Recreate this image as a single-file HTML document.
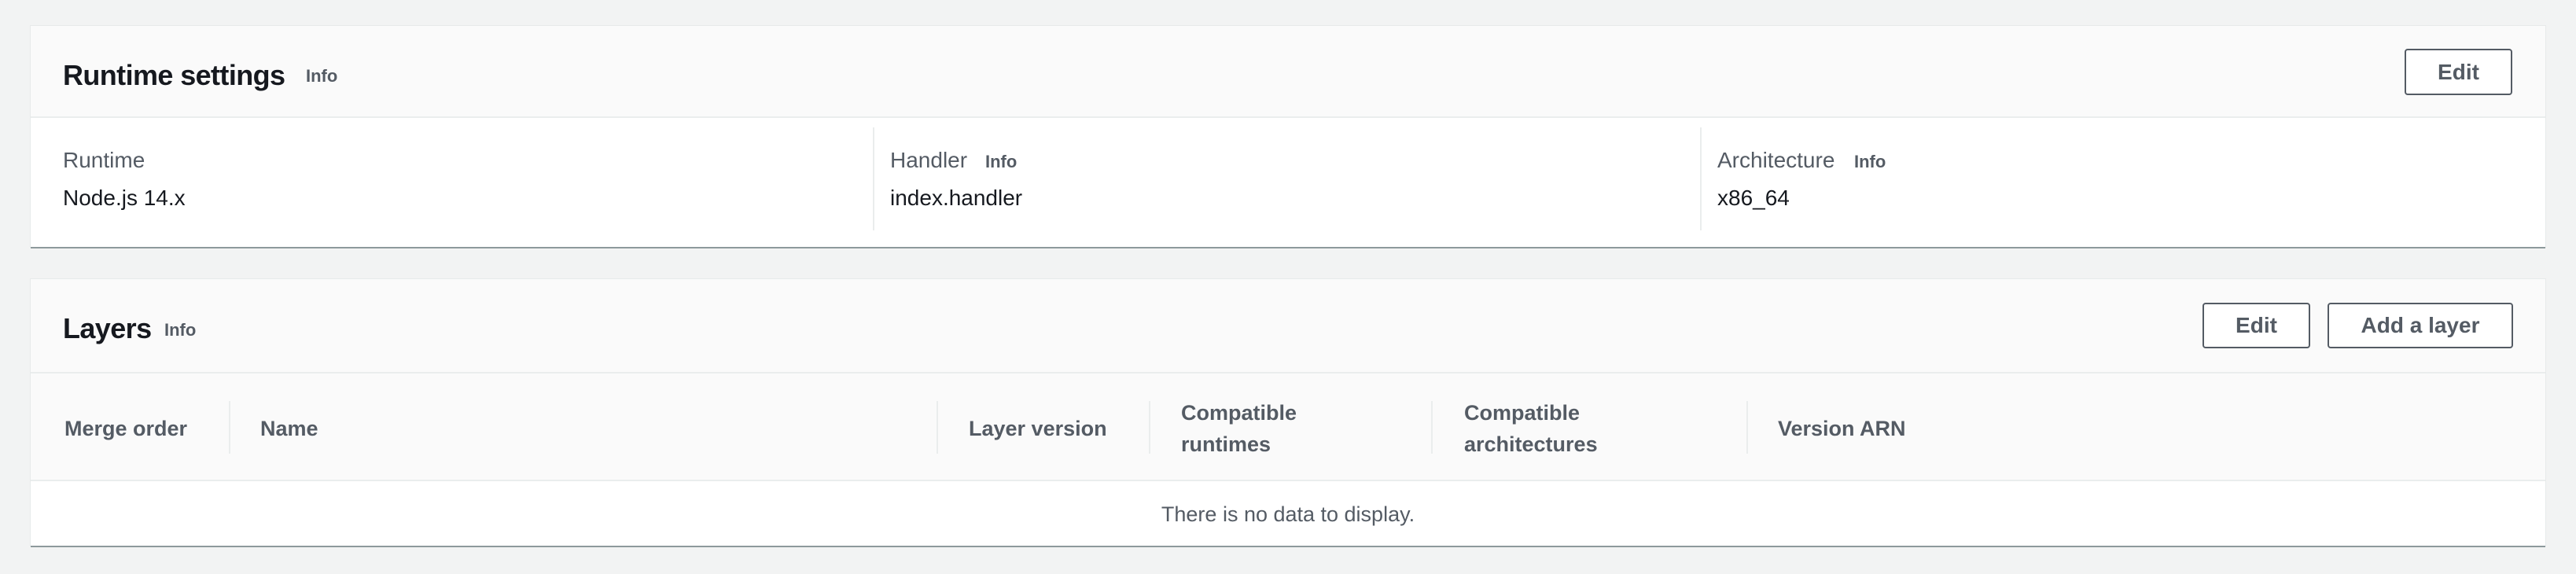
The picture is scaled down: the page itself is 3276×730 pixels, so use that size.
<!DOCTYPE html>
<html><head><style>
*{margin:0;padding:0;box-sizing:border-box}
body{width:3276px;height:730px;background:#f2f3f3;font-family:"Liberation Sans",sans-serif;position:relative;overflow:hidden}
.card{position:absolute;left:39px;width:3198px;background:#fff;box-shadow:0 2px 0 #8d999c,0 0 0 1px #e7eaea}
.hdr{position:absolute;left:0;right:0;top:0;background:#fafafa;border-bottom:2px solid #eaeded}
.t{position:absolute;white-space:nowrap}
.title{font-size:36px;font-weight:bold;color:#16191f;letter-spacing:-0.6px}
.info{font-size:22px;font-weight:bold;color:#545b64}
.lbl{font-size:28px;color:#545b64}
.val{font-size:28px;color:#16191f}
.th{font-size:27px;font-weight:bold;color:#545b64;line-height:40px}
.btn{position:absolute;border:2px solid #545b64;border-radius:4px;background:#fff;color:#545b64;font-weight:bold;font-size:28px;display:flex;align-items:center;justify-content:center}
.vd{position:absolute;width:2px;background:#eaeded}
</style></head><body>
<div class="card" style="top:33px;height:281px">
  <div class="hdr" style="height:117px"></div>
  <div class="t title" style="left:41px;top:42px">Runtime settings</div>
  <div class="t info" style="left:350px;top:51px">Info</div>
  <div class="btn" style="left:3019px;top:29px;width:137px;height:59px">Edit</div>
  <div class="vd" style="left:1071px;top:129px;height:131px"></div>
  <div class="vd" style="left:2123px;top:129px;height:131px"></div>
  <div class="t lbl" style="left:41px;top:155px">Runtime</div>
  <div class="t val" style="left:41px;top:203px">Node.js 14.x</div>
  <div class="t lbl" style="left:1093px;top:155px">Handler</div>
  <div class="t info" style="left:1214px;top:160px">Info</div>
  <div class="t val" style="left:1093px;top:203px">index.handler</div>
  <div class="t lbl" style="left:2145px;top:155px">Architecture</div>
  <div class="t info" style="left:2319px;top:160px">Info</div>
  <div class="t val" style="left:2145px;top:203px">x86_64</div>
</div>
<div class="card" style="top:355px;height:339px">
  <div class="hdr" style="height:257px;border-bottom:2px solid #eaeded"></div>
  <div class="hdr" style="height:120px;background:transparent"></div>
  <div class="t title" style="left:41px;top:42px">Layers</div>
  <div class="t info" style="left:170px;top:52px">Info</div>
  <div class="btn" style="left:2762px;top:30px;width:137px;height:58px">Edit</div>
  <div class="btn" style="left:2921px;top:30px;width:236px;height:58px">Add a layer</div>
  <div class="vd" style="left:252px;top:155px;height:67px"></div>
  <div class="vd" style="left:1152px;top:155px;height:67px"></div>
  <div class="vd" style="left:1422px;top:155px;height:67px"></div>
  <div class="vd" style="left:1781px;top:155px;height:67px"></div>
  <div class="vd" style="left:2182px;top:155px;height:67px"></div>
  <div class="t th" style="left:43px;top:170px">Merge order</div>
  <div class="t th" style="left:292px;top:170px">Name</div>
  <div class="t th" style="left:1193px;top:170px">Layer version</div>
  <div class="t th" style="left:1463px;top:150px">Compatible<br>runtimes</div>
  <div class="t th" style="left:1823px;top:150px">Compatible<br>architectures</div>
  <div class="t th" style="left:2222px;top:170px">Version ARN</div>
  <div class="t" style="left:0;right:0;text-align:center;top:284px;font-size:27px;color:#545b64">There is no data to display.</div>
</div>
</body></html>
